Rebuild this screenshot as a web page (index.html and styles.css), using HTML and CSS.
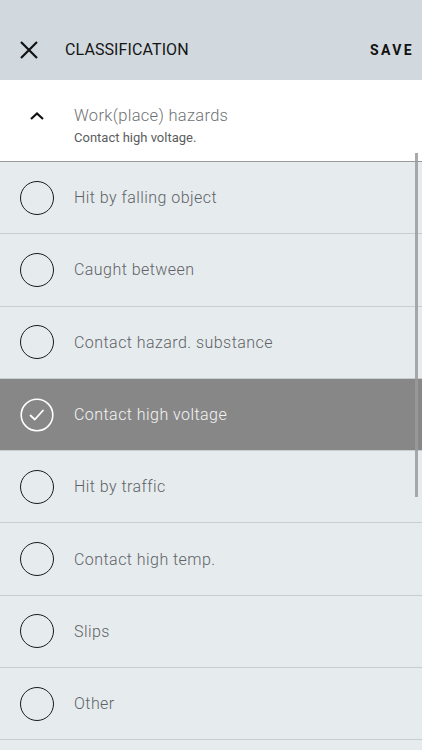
FILE: index.html
```html
<!DOCTYPE html>
<html lang="en">
<head>
<meta charset="utf-8">
<title>Classification</title>
<link rel="stylesheet" href="styles.css">
</head>
<body>
<div class="screen">
  <header class="appbar">
    <button class="close" aria-label="Close">
      <svg width="20" height="20" viewBox="0 0 20 20"><path d="M2 2 L18 18 M18 2 L2 18" stroke="#111" stroke-width="2.2" fill="none"/></svg>
    </button>
    <h1 class="title">CLASSIFICATION</h1>
    <span class="save">SAVE</span>
  </header>
  <section class="group">
    <span class="chev">
      <svg width="16" height="10" viewBox="0 0 16 10"><path d="M2 8 L8 2.5 L14 8" stroke="#111" stroke-width="2.2" fill="none"/></svg>
    </span>
    <div class="group-text">
      <div class="group-name">Work(place) hazards</div>
      <div class="group-sub">Contact high voltage.</div>
    </div>
  </section>
  <ul class="list">
    <li class="row"><span class="radio"></span><span class="label">Hit by falling object</span></li>
    <li class="row"><span class="radio"></span><span class="label">Caught between</span></li>
    <li class="row"><span class="radio"></span><span class="label">Contact hazard. substance</span></li>
    <li class="row selected"><span class="radio checked"><svg width="34" height="34" viewBox="0 0 34 34"><circle cx="17" cy="17" r="15.8" stroke="#fff" stroke-width="1.6" fill="none"/><path d="M10.5 17.5 L14.8 21.5 L23 12.5" stroke="#fff" stroke-width="1.8" fill="none" stroke-linecap="round" stroke-linejoin="round"/></svg></span><span class="label">Contact high voltage</span></li>
    <li class="row"><span class="radio"></span><span class="label">Hit by traffic</span></li>
    <li class="row"><span class="radio"></span><span class="label">Contact high temp.</span></li>
    <li class="row"><span class="radio"></span><span class="label">Slips</span></li>
    <li class="row"><span class="radio"></span><span class="label">Other</span></li>
  </ul>
  <div class="scrollbar"></div>
</div>
</body>
</html>
```

FILE: styles.css
```css
* { box-sizing: border-box; }
html, body {
  margin: 0;
  padding: 0;
  width: 422px;
  height: 750px;
  overflow: hidden;
  font-family: Roboto, "Noto Sans", "Liberation Sans", sans-serif;
}
.screen {
  position: relative;
  width: 422px;
  height: 750px;
  background: #e6ebee;
  overflow: hidden;
}
.appbar {
  height: 80px;
  background: #d1d9df;
  display: flex;
  align-items: center;
  padding: 19px 8px 0 18px;
}
.close {
  width: 22px;
  height: 22px;
  padding: 0;
  border: 0;
  background: none;
  display: flex;
  align-items: center;
  justify-content: center;
  margin-right: 25px;
}
.title {
  margin: 0;
  flex: 1;
  font-size: 16px;
  font-weight: 400;
  color: #151515;
  letter-spacing: 0.1px;
}
.save {
  font-size: 14px;
  font-weight: 700;
  letter-spacing: 2.4px;
  color: #111;
}
.group {
  height: 82px;
  background: #fff;
  border-bottom: 1px solid #9a9a9a;
  display: flex;
  align-items: center;
  padding: 0 0 2px 29px;
}
.chev {
  width: 16px;
  display: flex;
  margin-right: 29px;
  margin-top: -8px;
}
.group-text {
  display: flex;
  flex-direction: column;
  padding-top: 12px;
}
.group-name {
  font-size: 16.5px;
  font-weight: 300;
  color: #6f7274;
  line-height: 20px;
  letter-spacing: 0.3px;
}
.group-sub {
  font-size: 13px;
  color: #5a5d60;
  line-height: 17px;
  margin-top: 3px;
}
.list {
  list-style: none;
  margin: 0;
  padding: 0;
}
.row {
  height: 72.3px;
  display: flex;
  align-items: center;
  padding-left: 20px;
  border-bottom: 1.3px solid #c8cdd1;
  background: #e6ebee;
}
.row.selected {
  background: #878787;
}
.radio {
  width: 34px;
  height: 34px;
  border-radius: 50%;
  border: 1.6px solid #1a1a1a;
  margin-right: 20px;
  flex: none;
}
.radio.checked {
  border: 0;
}
.radio.checked svg { display: block; }
.label {
  font-size: 16px;
  font-weight: 300;
  color: #5f6367;
  letter-spacing: 0.45px;
}
.selected .label { color: #f4f4f4; }
.scrollbar {
  position: absolute;
  left: 415px;
  top: 153px;
  width: 3px;
  height: 344px;
  background: #9b9b9b;
  opacity: 0.85;
}
```
